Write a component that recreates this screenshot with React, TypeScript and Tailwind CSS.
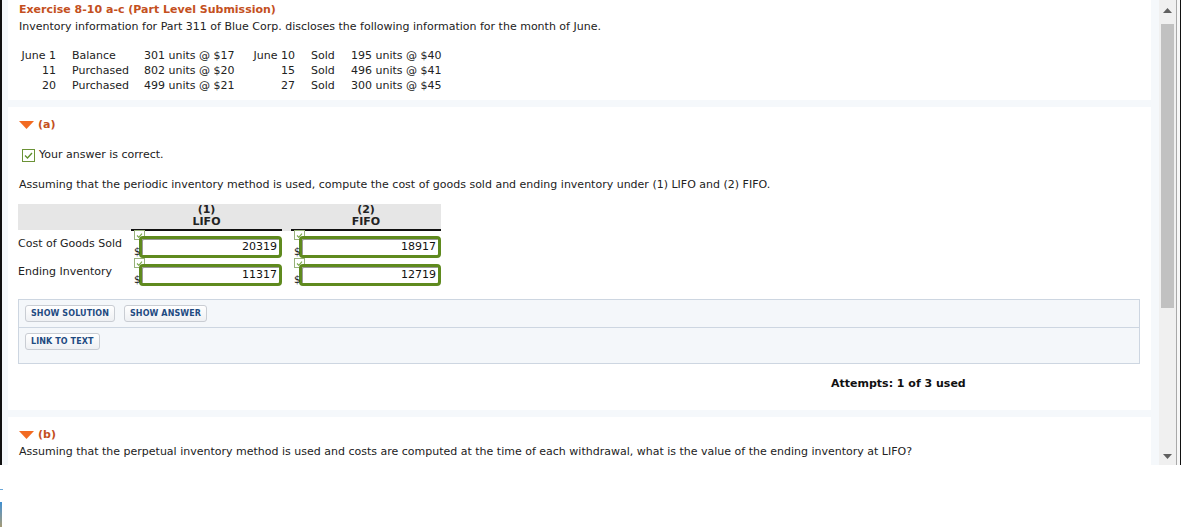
import React from 'react';

const font = { fontFamily: '"DejaVu Sans", Verdana, sans-serif' };

const Triangle = () => (
  <svg width="15" height="8" viewBox="0 0 15 8" className="shrink-0">
    <polygon points="0,0 15,0 7.5,8" fill="#f26a21" />
  </svg>
);

const Check = ({ size = 13, big = false }: { size?: number; big?: boolean }) => (
  <div
    className={`flex items-center justify-center bg-white ${big ? 'border border-[#6b9236]' : 'border border-[#97b27a]'}`}
    style={{ width: size, height: big ? size : size - 1 }}
  >
    <svg width={big ? 9 : 7} height={big ? 7 : 5} viewBox="0 0 9 7">
      <polyline points="1,3.5 3.5,6 8,1" fill="none" stroke={big ? '#5f8f2a' : '#79a648'} strokeWidth={big ? 1.3 : 1.6} />
    </svg>
  </div>
);

const AnswerCell = ({ value }: { value: string }) => (
  <div className="flex h-[28px] flex-col">
    <div className="ml-[3px]">
      <Check size={11} />
    </div>
    <div className="-mt-[4px] ml-[3px] flex items-end">
      <span className="relative z-10 w-[5px] shrink-0 overflow-visible whitespace-nowrap text-[10px] leading-[12px] text-[#222]">$</span>
      <div className="flex h-[22px] flex-1 items-center justify-end rounded-[4px] border-[3px] border-[#5f8a1e] bg-white pr-[2px] text-[11px] text-[#111] shadow-[inset_1px_1px_0_#9a9a9a]">
        {value}
      </div>
    </div>
  </div>
);

const Btn = ({ label }: { label: string }) => (
  <button className="h-[17px] rounded-[3px] border border-[#c9cdd3] bg-gradient-to-b from-white to-[#eef0f3] px-[5px] text-[8px] font-bold leading-[15px] tracking-[0.1px] text-[#1f4b82]">
    {label}
  </button>
);

const rows = [
  ['June 1', 'Balance', '301 units @ $17', 'June 10', 'Sold', '195 units @ $40'],
  ['11', 'Purchased', '802 units @ $20', '15', 'Sold', '496 units @ $41'],
  ['20', 'Purchased', '499 units @ $21', '27', 'Sold', '300 units @ $45'],
];

export default function App() {
  return (
    <div className="flex h-[527px] w-[1184px] flex-col overflow-hidden bg-white text-[11px] text-[#222]" style={font}>
      <div className="flex h-[465px] shrink-0">
        <div className="w-[2px] shrink-0 bg-[#111]" />
        {/* content */}
        <div className="flex w-[1157px] shrink-0 flex-col gap-[7px] overflow-hidden bg-[#f5f8fb] pl-[6px] pr-[8px]">
          {/* intro */}
          <section className="flex h-[100px] shrink-0 flex-col bg-white pl-[11px] pt-[3px]">
            <h1 className="text-[11px] font-bold leading-[14px] text-[#c4501e]">Exercise 8-10 a-c (Part Level Submission)</h1>
            <p className="mt-[3px] whitespace-nowrap leading-[14px]">
              Inventory information for Part 311 of Blue Corp. discloses the following information for the month of June.
            </p>
            <div className="mt-[14px] grid grid-cols-[37px_88px_109px_42px_56px_auto] leading-[15px]">
              {rows.map((r, i) => (
                <React.Fragment key={i}>
                  <span className="text-right">{r[0]}</span>
                  <span className="pl-[16px]">{r[1]}</span>
                  <span>{r[2]}</span>
                  <span className="text-right">{r[3]}</span>
                  <span className="pl-[16px]">{r[4]}</span>
                  <span>{r[5]}</span>
                </React.Fragment>
              ))}
            </div>
          </section>

          {/* part a */}
          <section className="flex h-[303px] shrink-0 flex-col bg-white pl-[10px] pt-[11px]">
            <div className="flex h-[14px] items-center gap-[4px] pl-[1px]">
              <Triangle />
              <span className="font-bold text-[#c4501e]">(a)</span>
            </div>
            <div className="mt-[16px] flex h-[14px] items-center gap-[4px] pl-[4px]">
              <Check big />
              <span>Your answer is correct.</span>
            </div>
            <p className="mt-[16px] whitespace-nowrap pl-[1px] leading-[14px]">
              Assuming that the periodic inventory method is used, compute the cost of goods sold and ending inventory under (1) LIFO and (2) FIFO.
            </p>
            <div className="mt-[12px] w-[423px]">
              <div className="grid h-[26px] grid-cols-[113px_151px_9px_150px] bg-[#e6e6e6] text-center font-bold leading-[12px]">
                <div />
                <div className="flex flex-col justify-end border-b-[2px] border-[#111] pb-[1px]">
                  <span>(1)</span>
                  <span>LIFO</span>
                </div>
                <div className="bg-[#e6e6e6]" />
                <div className="flex flex-col justify-end border-b-[2px] border-[#111] pb-[1px]">
                  <span>(2)</span>
                  <span>FIFO</span>
                </div>
              </div>
              <div className="grid grid-cols-[113px_151px_9px_150px]">
                <div className="flex h-[28px] items-center">Cost of Goods Sold</div>
                <AnswerCell value="20319" />
                <div />
                <AnswerCell value="18917" />
                <div className="flex h-[28px] items-center">Ending Inventory</div>
                <AnswerCell value="11317" />
                <div />
                <AnswerCell value="12719" />
              </div>
            </div>

            <div className="mr-[11px] mt-[13px] flex flex-col border border-[#cdd6e1] bg-[#f4f7fa]">
              <div className="flex h-[28px] items-center gap-[9px] border-b border-[#cdd6e1] pl-[6px]">
                <Btn label="SHOW SOLUTION" />
                <Btn label="SHOW ANSWER" />
              </div>
              <div className="flex h-[35px] items-start pl-[6px] pt-[5px]">
                <Btn label="LINK TO TEXT" />
              </div>
            </div>

            <div className="mt-[12px] flex pl-[813px]">
              <span className="font-bold text-[#111]">Attempts: 1 of 3 used</span>
            </div>
          </section>

          {/* part b */}
          <section className="flex flex-1 flex-col bg-white pl-[11px] pt-[11px]">
            <div className="flex h-[14px] items-center gap-[4px]">
              <Triangle />
              <span className="font-bold text-[#c4501e]">(b)</span>
            </div>
            <p className="mt-[3px] whitespace-nowrap leading-[14px]">
              Assuming that the perpetual inventory method is used and costs are computed at the time of each withdrawal, what is the value of the ending inventory at LIFO?
            </p>
          </section>
        </div>

        {/* scrollbar */}
        <div className="flex w-[17px] shrink-0 flex-col items-center bg-[#f0f0f0]">
          <div className="flex h-[20px] items-center">
            <svg width="9" height="5" viewBox="0 0 9 5"><polygon points="0,5 9,5 4.5,0" fill="#606060" /></svg>
          </div>
          <div className="mt-[4px] h-[284px] w-[13px] bg-[#c1c1c1]" />
          <div className="flex-1" />
          <div className="flex h-[17px] items-center">
            <svg width="9" height="5" viewBox="0 0 9 5"><polygon points="0,0 9,0 4.5,5" fill="#606060" /></svg>
          </div>
        </div>
        <div className="w-[1px] shrink-0 bg-[#a9a9a9]" />
        <div className="w-[3px] shrink-0 bg-[#f7f7f7]" />
        <div className="w-[1px] shrink-0 bg-[#111]" />
        <div className="flex-1 bg-white" />
      </div>
      <div className="flex flex-1 flex-col bg-white">
        <div className="mt-[24px] h-[1px] w-[3px] bg-[#6aa7d8]" />
        <div className="mt-[12px] h-[26px] w-[2px] bg-gradient-to-b from-[#3d8fd1] to-[#a89a70]" />
      </div>
    </div>
  );
}
